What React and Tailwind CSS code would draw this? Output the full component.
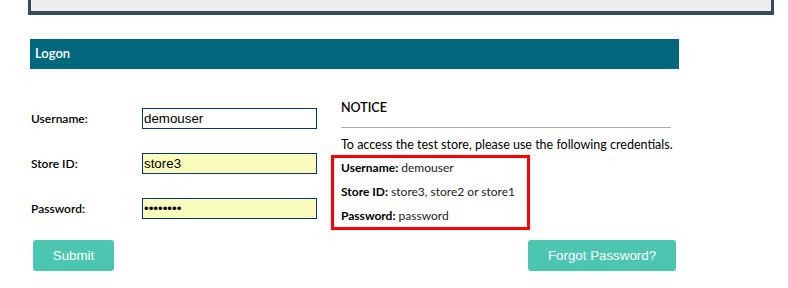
import React from "react";

// Logon panel with demo credentials notice

const labelFont = { fontFamily: "Lato, 'Open Sans', sans-serif" };

const FormRow = ({ label, value, type = "text", filled = false }) => (
  <div className="flex items-center h-[21px] mb-[24px]">
    <label className="w-[111px] text-[12px] font-semibold text-black" style={labelFont}>
      {label}
    </label>
    <input
      type={type}
      value={value}
      readOnly
      className={`w-[175px] h-[21px] border border-[#003a6c] px-[1px] text-[13.33px] text-black outline-none ${
        filled ? "bg-[#fafcbe]" : "bg-white"
      }`}
      style={{ fontFamily: "'Liberation Sans', Arial, sans-serif" }}
    />
  </div>
);

export default function App() {
  return (
    <div className="w-[788px] h-[288px] bg-white overflow-hidden relative" style={labelFont}>
      {/* Header box (cut off at top) */}
      <div className="ml-[28px] w-[746px] h-[15px] bg-[#eeeeee] border-x-[3px] border-b-[4px] border-[#364a5e]" />

      {/* Logon title bar */}
      <div className="ml-[30px] mt-[24px] w-[649px] h-[30px] bg-[#01677d] flex items-center pl-[5px]">
        <span className="text-white text-[13px] font-semibold">Logon</span>
      </div>

      <div className="flex h-[140px] mt-[31px]">
        {/* Left: form */}
        <div className="w-[331px] pl-[31px] pt-[8px]">
          <FormRow label="Username:" value="demouser" />
          <FormRow label="Store ID:" value="store3" filled />
          <FormRow label="Password:" value="password" type="password" filled />
        </div>

        {/* Right: notice */}
        <div className="w-[350px] text-[12px] text-black">
          <div className="pl-[10px] leading-[16px] font-semibold text-[12.5px]">NOTICE</div>
          <div className="ml-[10px] mt-[11px] w-[330px] border-t border-[#a9a9a9]" />
          <div className="pl-[10px] mt-[9px] leading-[16px] text-[12.5px] whitespace-nowrap">
            To access the test store, please use the following credentials.
          </div>
          <div className="mt-[2px] w-[199px] border-[3px] border-[#ff0000] pl-[7px] pb-[1px] flex flex-col gap-[4px]">
            <div className="leading-[20px]">
              <span className="font-bold">Username:</span> <span className="text-[#222]">demouser</span>
            </div>
            <div className="leading-[20px]">
              <span className="font-bold">Store ID:</span> <span className="text-[#222]">store3, store2 or store1</span>
            </div>
            <div className="leading-[20px]">
              <span className="font-bold">Password:</span> <span className="text-[#222]">password</span>
            </div>
          </div>
        </div>
      </div>

      {/* Buttons */}
      <div className="flex">
        <button
          className="ml-[33px] w-[81px] h-[31px] rounded-[3px] bg-[#4cc5b1] text-white text-[13.33px]"
          style={{ fontFamily: "'Liberation Sans', Arial, sans-serif" }}
        >
          Submit
        </button>
        <button
          className="ml-[414px] w-[148px] h-[31px] rounded-[3px] bg-[#4cc5b1] text-white text-[13.33px]"
          style={{ fontFamily: "'Liberation Sans', Arial, sans-serif" }}
        >
          Forgot Password?
        </button>
      </div>
    </div>
  );
}
